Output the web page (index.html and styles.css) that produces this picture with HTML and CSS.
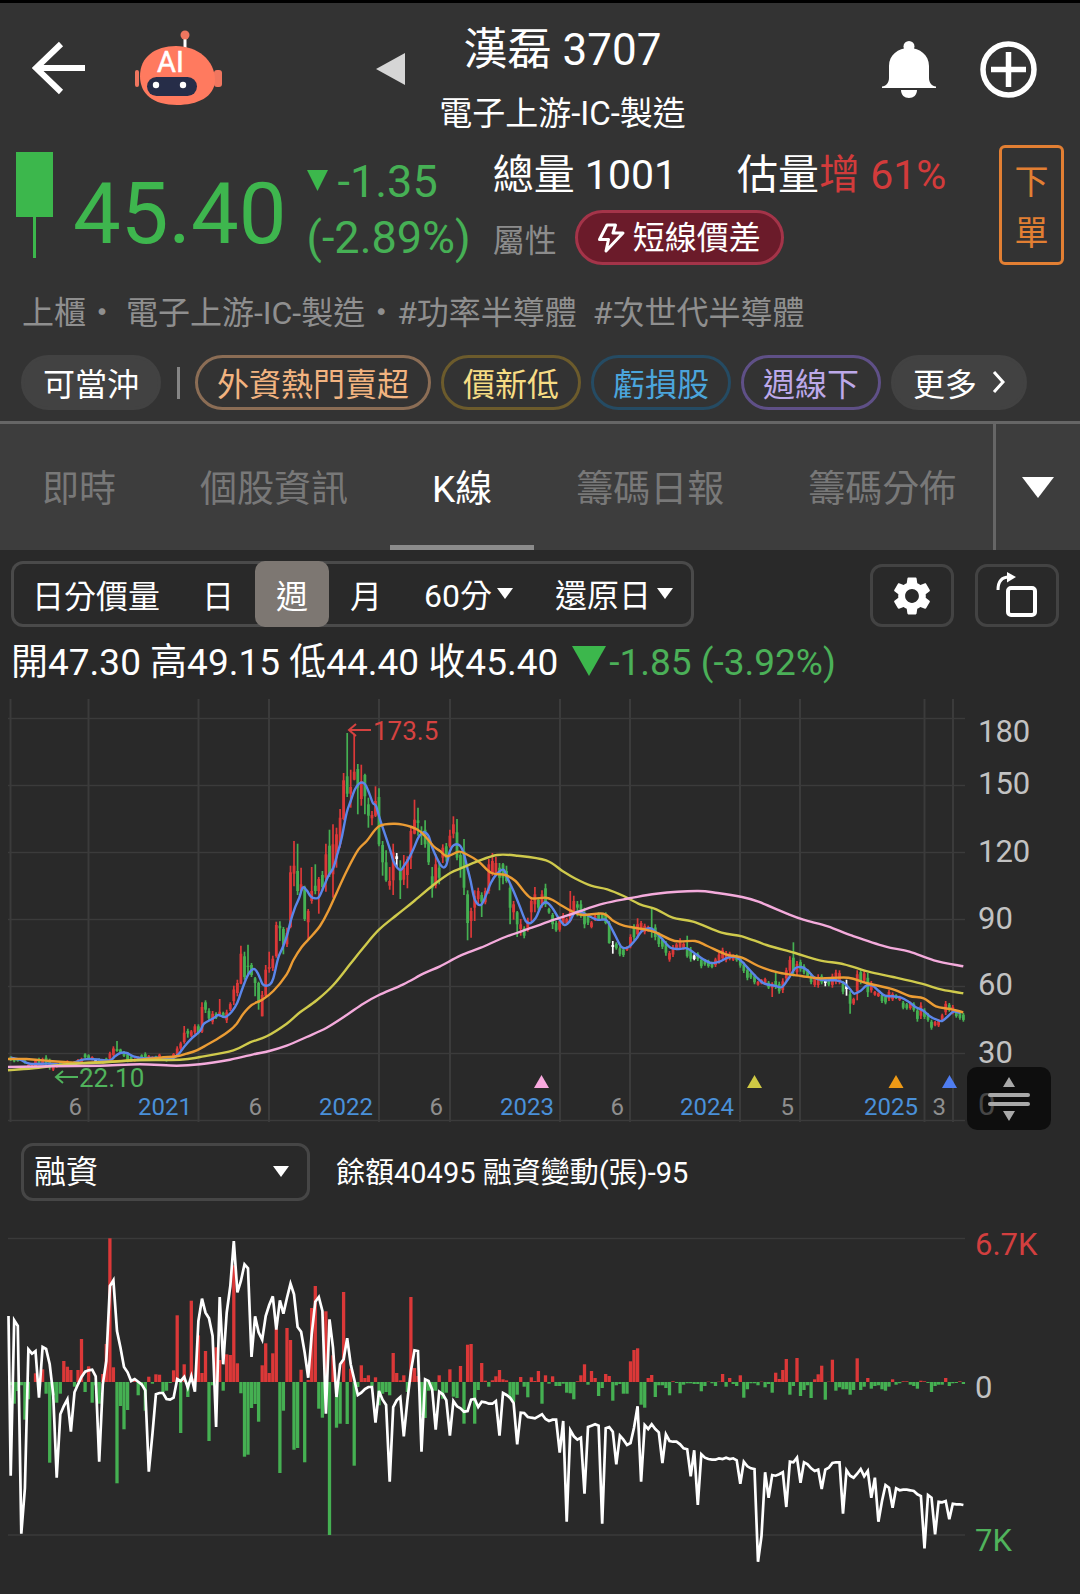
FILE: index.html
```html
<!DOCTYPE html>
<html lang="zh-Hant">
<head>
<meta charset="utf-8">
<meta name="viewport" content="width=device-width, initial-scale=1">
<title>漢磊 3707</title>
<link rel="stylesheet" href="styles.css">
</head>
<body>
<header class="summary">
  <div class="topbar">
    <button class="icon-btn" aria-label="返回">
      <svg width="53" height="54" viewBox="0 0 53 54"><path d="M29 3 4 27l25 24M4 27h49" fill="none" stroke="#fff" stroke-width="6"/></svg>
    </button>
    <button class="icon-btn robot" aria-label="AI 助理">
      <svg width="87" height="76" viewBox="0 0 87 76">
        <path d="M50 8v10" stroke="#fff" stroke-width="3"/>
        <circle cx="50" cy="5" r="4.500" fill="#f0765f"/>
        <rect x="0" y="40" width="4" height="17" rx="2" fill="#f0765f"/>
        <rect x="79" y="40" width="8" height="17" rx="3" fill="#f0765f"/>
        <path d="M5 46C5 27 20 16 41 16s39 14 39 34c0 17-18 25-38 25C18 75 5 64 5 46z" fill="#ff7a5f"/>
        <rect x="12" y="47" width="50" height="19" rx="9.500" fill="#262d48"/>
        <circle cx="21" cy="55" r="3.200" fill="#fff"/><circle cx="48" cy="55" r="3.200" fill="#fff"/>
        <text x="22" y="42" font-size="29" fill="#fff" stroke="#fff" stroke-width=".5">AI</text>
      </svg>
    </button>
    <div class="stock">
      <button class="icon-btn" aria-label="上一檔">
        <svg width="29" height="32" viewBox="0 0 29 32"><path d="M0 16 29 0v32z" fill="#d6d6d6"/></svg>
      </button>
      <div class="stock-name">
        <h1>漢磊 3707</h1>
        <p>電子上游-IC-製造</p>
      </div>
    </div>
    <button class="icon-btn" aria-label="通知">
      <svg width="54" height="57" viewBox="0 0 54 57" fill="#fff"><circle cx="27" cy="5.500" r="5.500"/><path d="M7 25C7 14 16 7 27 7s20 7 20 18v12c0 5 3 8 7 8.500V47H0v-1.500C4 45 7 42 7 37zM19 49h16c0 5-3.500 8-8 8s-8-3-8-8z"/></svg>
    </button>
    <button class="icon-btn add" aria-label="加入自選">
      <svg width="57" height="57" viewBox="0 0 57 57" fill="none" stroke="#fff"><circle cx="28.500" cy="28.500" r="25.500" stroke-width="5.500"/><path d="M28.500 11v35M11 28.500h35" stroke-width="5.500"/></svg>
    </button>
  </div>

  <div class="quote">
    <svg class="candle" width="37" height="106" viewBox="0 0 37 106" aria-hidden="true"><path d="M0 0h37v65H20v41h-3V65H0z" fill="#3cb74c"/></svg>
    <div class="price">45.40</div>
    <div class="change">
      <div><svg class="down" width="21" height="21" viewBox="0 0 21 21"><path d="M0 0h21L10.500 21z" fill="#3cb74c"/></svg>-1.35</div>
      <div>(-2.89%)</div>
    </div>
    <div class="stats">
      <div class="volume"><span>總量 1001</span><span>估量<em>增 61%</em></span></div>
      <div class="trait"><span>屬性</span>
        <button class="trait-pill"><svg width="27" height="30" viewBox="0 0 27 30"><path d="M9 2h8.500L15 10h10L8 28l2.500-11.500h-9z" fill="none" stroke="#fff" stroke-width="3" stroke-linejoin="round"/></svg>短線價差</button>
      </div>
    </div>
    <button class="order">下<br>單</button>
  </div>

  <p class="category">上櫃・ 電子上游-IC-製造・#功率半導體&nbsp; #次世代半導體</p>
  <div class="chips">
    <button class="chip solid">可當沖</button>
    <i class="bar"></i>
    <button class="chip orange">外資熱門賣超</button>
    <button class="chip yellow">價新低</button>
    <button class="chip blue">虧損股</button>
    <button class="chip purple">週線下</button>
    <button class="chip solid more">更多<svg width="13" height="22" viewBox="0 0 13 22"><path d="m2 1 9 10-9 10" fill="none" stroke="#fff" stroke-width="3"/></svg></button>
  </div>
</header>

<nav class="tabs">
  <div class="tab-strip">
    <a href="#now">即時</a><a href="#info">個股資訊</a><a href="#k" class="active">K線</a><a href="#daily">籌碼日報</a><a href="#dist">籌碼分佈</a>
  </div>
  <button class="tab-more" aria-label="更多分頁"><svg width="32" height="21" viewBox="0 0 32 21"><path d="M0 0h32L16 21z" fill="#fff"/></svg></button>
</nav>

<main>
  <div class="toolbar">
    <div class="periods">
      <button>日分價量</button><button>日</button><button class="active">週</button><button>月</button>
      <label class="drop"><select aria-label="分鐘"><option>60分</option></select><svg width="16" height="11" viewBox="0 0 16 11"><path d="M0 0h16L8 11z" fill="#fff"/></svg></label>
      <label class="drop"><select aria-label="還原"><option>還原日</option></select><svg width="16" height="11" viewBox="0 0 16 11"><path d="M0 0h16L8 11z" fill="#fff"/></svg></label>
    </div>
    <button class="tool" aria-label="設定">
      <svg width="46" height="46" viewBox="0 0 24 24" fill="#fff"><path d="M19.140 12.940c.04-.3.060-.610.060-.940 0-.320-.020-.640-.070-.940l2.030-1.580c.180-.140.230-.410.120-.610l-1.920-3.320c-.120-.220-.370-.290-.590-.220l-2.390.960c-.5-.380-1.030-.7-1.620-.940l-.360-2.540c-.040-.240-.240-.410-.480-.410h-3.840c-.240 0-.430.170-.470.410l-.360 2.540c-.590.240-1.130.570-1.620.940l-2.390-.960c-.220-.080-.470 0-.590.220L2.740 8.870c-.120.210-.080.470.120.610l2.030 1.580c-.050.3-.090.630-.090.940s.020.640.070.940l-2.030 1.580c-.180.140-.230.410-.120.610l1.920 3.320c.120.220.370.290.590.220l2.390-.960c.5.380 1.030.7 1.620.940l.360 2.540c.050.240.240.410.480.410h3.840c.240 0 .440-.170.470-.410l.360-2.540c.590-.240 1.130-.560 1.620-.940l2.390.960c.220.080.470 0 .590-.220l1.920-3.320c.120-.220.070-.470-.120-.610zM12 15.600c-1.980 0-3.600-1.620-3.600-3.600s1.620-3.600 3.600-3.600 3.600 1.620 3.600 3.600-1.620 3.600-3.600 3.600z"/></svg>
    </button>
    <button class="tool" aria-label="旋轉">
      <svg width="42" height="48" viewBox="0 0 42 48" fill="none" stroke="#fff"><rect x="12" y="16" width="27" height="27" rx="3" stroke-width="4"/><path d="M2 18C2 9 6 5 13 5" stroke-width="3"/><path d="m11 0 9 5-9 5.500z" fill="#fff" stroke="none"/></svg>
    </button>
  </div>

  <div class="ohlc">
    <span>開47.30 高49.15 低44.40 收45.40</span>
    <span class="fall"><svg width="34" height="30" viewBox="0 0 34 30"><path d="M0 0h34L17 30z" fill="#3cb74c"/></svg>-1.85 (-3.92%)</span>
  </div>

  <section class="kline">
    <svg viewBox="0 0 1080 440" role="img" aria-label="週K線圖">
      <g class="grid">
        <path d="M8 27.500h957M8 94.500h957M8 161.500h957M8 228.500h957M8 295.500h957M8 362.500h957M8 429.500h957"/>
        <path class="v" d="M10.500 8v423M88.500 8v423M198.500 8v423M269 8v423M379 8v423M450 8v423M560 8v423M630 8v423M740 8v423M800 8v423M924.500 8v423M953 8v423"/>
      </g>
      <g id="candles"></g>
      <g id="averages"></g>
      <g class="axis-y">
        <text x="978" y="51">180</text><text x="978" y="103">150</text><text x="978" y="171">120</text><text x="978" y="238">90</text><text x="978" y="304">60</text><text x="978" y="372">30</text><text x="978" y="424">0</text>
      </g>
      <g class="axis-x">
        <text x="82" y="424">6</text><text class="yr" x="192" y="424">2021</text><text x="262" y="424">6</text><text class="yr" x="373" y="424">2022</text><text x="443" y="424">6</text><text class="yr" x="554" y="424">2023</text><text x="624" y="424">6</text><text class="yr" x="734" y="424">2024</text><text x="794" y="424">5</text><text class="yr" x="918" y="424">2025</text><text x="946" y="424">3</text>
      </g>
      <g class="peak"><path d="M371 39h-22m7-6-7 6 7 6"/><text x="373" y="49">173.5</text></g>
      <g class="trough"><path d="M78 386H56m7-6-7 6 7 6"/><text x="79" y="396">22.10</text></g>
      <path d="m541.500 384 7.500 13h-15z" fill="#f8a9de"/><path d="m754.500 384 7.500 13h-15z" fill="#cfc944"/><path d="m896 384 7.500 13h-15z" fill="#ee9a16"/><path d="m949.500 384 7.500 13h-15z" fill="#4f7df0"/>
    </svg>
    <button class="resize" aria-label="調整高度">
      <svg width="42" height="44" viewBox="0 0 42 44" fill="#a9a9a9"><path d="m21 0 6 10H15zM21 44l6-10H15z"/><rect y="16" width="42" height="4" rx="2"/><rect y="25" width="42" height="4" rx="2"/></svg>
    </button>
  </section>

  <div class="indicator">
    <label class="picker"><select aria-label="指標"><option>融資</option></select><svg width="16" height="11" viewBox="0 0 16 11"><path d="M0 0h16L8 11z" fill="#fff"/></svg></label>
    <span>餘額40495 融資變動(張)-95</span>
  </div>

  <section class="margin">
    <svg viewBox="0 0 1080 384" role="img" aria-label="融資變動圖">
      <path class="rule" d="M8 27.500h957M8 324h957"/>
      <g id="bars"></g>
      <path id="balance"/>
      <g class="axis-y">
        <text class="red" x="975" y="44">6.7K</text><text x="975" y="187">0</text><text class="green" x="975" y="340">7K</text>
      </g>
    </svg>
  </section>
</main>
<script src="chart.js"></script>
</body>
</html>
```
FILE: styles.css
```css
* { box-sizing: border-box; }
body {
  margin: 0;
  background: #292929;
  color: #fff;
  font-family: Roboto, "Noto Sans CJK TC", sans-serif;
  font-size: 32px;
}
h1, p { margin: 0; font-weight: 400; }
svg { display: block; flex: none; }
button, select {
  margin: 0;
  padding: 0;
  border: 0;
  background: none;
  color: inherit;
  font: inherit;
}
select { appearance: none; }
em { font-style: normal; color: #d23b3b; }

.summary {
  background: #333;
  border-top: 3px solid #000;
  border-bottom: 3px solid #666;
  padding-bottom: 11px;
}
.topbar { display: flex; align-items: flex-start; padding: 14px 43px 0 32px; }
.topbar .icon-btn { margin-top: 24px; }
.topbar .robot { margin: 13px 0 0 50px; }
.topbar .add { margin-left: 44px; }
.stock { flex: 1; display: flex; justify-content: center; gap: 34px; padding-right: 42px; }
.stock .icon-btn { align-self: flex-start; margin-top: 36px; }
.stock-name { text-align: center; }
.stock-name h1 { font-size: 44px; line-height: 66px; }
.stock-name p { font-size: 33px; line-height: 62px; }

.quote { display: flex; align-items: flex-start; padding: 0 16px; }
.candle { margin-top: 7px; }
.price { margin: 16px 0 0 20px; font-size: 85px; line-height: 106px; color: #3eb64e; }
.change { margin: 9px 0 0 20px; font-size: 45px; line-height: 56px; color: #46b055; }
.change div { display: flex; gap: 10px; }
.change .down { margin-top: 16px; }
.stats { margin-left: 22px; display: grid; gap: 4px; }
.volume { display: flex; gap: 60px; font-size: 41px; line-height: 61px; white-space: nowrap; }
.trait { display: flex; align-items: center; gap: 18px; color: #8c8c8c; }
.trait-pill {
  display: flex;
  align-items: center;
  gap: 8px;
  height: 55px;
  padding: 0 20px;
  border: 3px solid #a43449;
  border-radius: 28px;
  background: #6b1b2a;
  color: #fff;
  line-height: 48px;
}
.order {
  margin-left: auto;
  width: 65px;
  height: 120px;
  padding-top: 5px;
  border: 3px solid #e27f33;
  border-radius: 6px;
  color: #e27f33;
  font-size: 34px;
  line-height: 51px;
}
.category { padding: 22px 22px 18px; line-height: 48px; color: #8f8f8f; white-space: nowrap; }
.chips { display: flex; align-items: center; gap: 10px; padding: 0 21px; }
.chip { height: 55px; padding: 0 19px 2px; border: 3px solid; border-radius: 28px; white-space: nowrap; }
.bar { width: 3px; height: 32px; margin: 0 5px 0 6px; background: #858585; }
.solid { background: #424242; border-color: #424242; }
.orange { color: #f2b380; border-color: #8b6d55; }
.yellow { color: #f6dc84; border-color: #6c5b2c; }
.blue { color: #4ba5dc; border-color: #254b63; }
.purple { color: #bda9ea; border-color: #5f5087; }
.more { display: flex; align-items: center; gap: 15px; }

.tabs { display: flex; height: 126px; background: #3d3d3d; }
.tab-strip { flex: 1; display: flex; overflow: hidden; }
.tab-strip a {
  flex: none;
  padding: 5px 42px 0;
  border-bottom: 5px solid transparent;
  font-size: 37px;
  line-height: 121px;
  color: #787878;
  text-decoration: none;
}
.tab-strip .active { color: #fff; border-color: #8b8b8b; }
.tab-more { width: 87px; padding: 0 26px; border-left: 3px solid #666; }

.toolbar { display: flex; align-items: flex-end; gap: 21px; padding: 11px 21px 0 11px; }
.periods {
  display: flex;
  height: 66px;
  margin-right: auto;
  border-radius: 12px;
  box-shadow: inset 0 0 0 3px #4a4a4a;
}
.periods button { padding: 0 21px; }
.periods .active { border-radius: 10px; background: #7d7772; }
.drop { display: flex; align-items: center; gap: 5px; padding: 0 21px; }
.drop select { padding-top: 4px; }
.drop svg { margin-bottom: 2px; }
.tool {
  display: grid;
  place-items: center;
  width: 84px;
  height: 63px;
  border: 3px solid #434343;
  border-radius: 12px;
}
.ohlc { display: flex; gap: 14px; padding: 9px 11px 1px; font-size: 37px; line-height: 54px; white-space: nowrap; }
.fall { display: flex; align-items: center; gap: 3px; color: #4bb058; }
.fall svg { margin-bottom: 4px; }

.kline { position: relative; }
.kline > svg, .margin > svg { width: 100%; height: auto; }
.grid path { stroke: #3b3b3b; stroke-width: 1.500; }
.grid .v { stroke-width: 2; }
.axis-y { font-size: 31px; fill: #c2c2c2; }
.axis-x { font-size: 24px; fill: #8f8f8f; text-anchor: end; }
.axis-x .yr { fill: #4a90d9; }
.peak, .trough { font-size: 26px; }
.peak path, .trough path { fill: none; stroke-width: 2; }
.peak { fill: #d54240; }
.peak path { stroke: #d54240; }
.trough { fill: #50b35c; }
.trough path { stroke: #50b35c; }
.resize {
  position: absolute;
  right: 29px;
  bottom: 1px;
  display: grid;
  place-items: center;
  width: 84px;
  height: 63px;
  border-radius: 10px;
  background: rgba(0, 0, 0, .64);
}
.wick { stroke-width: 1.700; }
.body { stroke-width: 2.800; }
.up { stroke: #dc3838; }
.dn { stroke: #45b052; }
.flat { stroke: #fff; }
.ma { fill: none; stroke-width: 2.400; }

.indicator { display: flex; align-items: center; gap: 26px; padding: 12px 21px 10px; font-size: 29px; }
.indicator span { padding-top: 2px; line-height: 54px; }
.picker { position: relative; width: 289px; height: 58px; font-size: 32px; }
.picker select { width: 100%; height: 100%; padding: 0 10px; border: 3px solid #464646; border-radius: 12px; }
.picker svg { position: absolute; right: 21px; top: 23px; }
.rule { stroke: #3a3a3a; stroke-width: 1.500; }
.bar-line { stroke-width: 3.300; }
#balance { fill: none; stroke: #fff; stroke-width: 2.700; }
.red { fill: #d23f3f; }
.green { fill: #50b35c; }
```
FILE: chart.js
```js
const STEP = 3.5417;
const xAt = i => 10.7 + STEP * i;
const f = n => n.toFixed(1);

// Weekly candles: colour, high, low, and optionally body top and bottom (thirds of a chart unit).
const candles = `g 1096 1110|g 1100 1114|g 1104 1112|r 1102 1110|g 1106 1118|r 1120 1130|r 1122 1134|r 1104 1134|g 1100 1118|r 1100 1122
g 1093 1128|g 1103 1136|r 1118 1140|r 1116 1130|g 1112 1124|r 1114 1126|r 1108 1124|g 1112 1128|r 1110 1122|r 1104 1120
r 1100 1118|g 1087 1102|g 1090 1106|r 1096 1108|w 1104 1116|g 1102 1114|r 1104 1118|g 1100 1114|r 1082 1108|r 1066 1098
g 1050 1082 1074 1080|g 1073 1086|g 1080 1098|g 1084 1114|g 1094 1112|r 1102 1112|r 1096 1108|g 1090 1104|g 1084 1110|r 1092 1106
r 1096 1108|g 1094 1108|r 1088 1104|g 1096 1110|g 1100 1112|r 1100 1108|r 1086 1102|r 1066 1098|r 1052 1078|r 1005 1058 1025 1053
g 1013 1040 1020 1028|r 1017 1038|r 1000 1030|g 1000 1030|r 934 1026 948 1022|g 928 966 934 956|g 952 990|r 960 1000|g 964 984|r 924 976 962 970
g 962 980|r 956 996|r 934 960|r 884 942|r 866 916|r 764 880 788 878|g 782 866 796 858|g 761 850 824 828|g 816 858 822 852|g 858 916 862 876
g 872 956 876 936|r 900 976 912 976|r 822 916 836 914|r 782 845 828 834|r 794 840|r 692 800 702 795|g 691 750 704 712|g 708 790 714 762|r 710 768 726 760|r 524 712 544 708
r 450 586 524 548|g 458 612 540 600|r 530 602 580 600|g 584 690 588 684|r 654 744 660 694|r 528 638 600 630|g 520 610 584 600|r 558 668 564 600|g 540 600|r 458 602 490 560
g 416 558 464 550|r 400 620 460 550|r 410 530 430 500|r 354 470 380 460|r 246 388 268 384|g 126 318 256 308|r 236 350 288 308|r 128 268 242 266|g 219 370 234 290|r 221 344 270 324
g 248 370 252 316|g 320 410 340 374|r 360 403 372 382|r 286 378 330 374|g 292 466 318 460|g 450 554 462 514|g 478 572 514 568|r 528 596 570 584|r 458 612 484 568|w 486 530 496 504
g 508 624 540 568|r 492 582 530 566|r 496 592 504 552|r 408 534 420 500|r 326 430 386 428|g 350 434 388 396|g 406 462 424 434|g 388 470 416 460|g 436 522 450 514|g 528 620 556 592
r 490 592 520 584|g 510 580 530 560|r 460 516 470 500|g 456 512 466 500|r 416 470 434 466|r 376 442 400 428|g 384 508 424 500|g 480 560 492 530|g 444 612 480 590|g 598 748 610 696
r 650 740 660 690|r 598 690 614 650|r 590 640 600 624|g 604 678 612 632|r 590 640 600 634|r 504 608 520 600|r 486 554 510 548|r 498 552 516 546|g 516 598 530 560|g 516 580 520 560
g 524 575 540 570|g 580 700 590 650|r 630 686 640 664|g 660 738 664 700|r 684 734 700 714|g 706 742 712 734|r 680 722|r 620 690 630 664|r 588 664 610 640|g 618 658 626 650
r 598 650 610 640|g 578 648 592 640|g 650 668|g 666 714 672 700|g 690 722 696 718|r 684 722 690 716|r 666 704|r 680 702|r 600 694 654 690|r 614 664 630 660
g 630 676 640 650|g 628 680 640 670|g 650 712 668 700|g 668 702|r 690 712|r 670 690|g 664 690|g 666 688|g 664 700 668 696|g 690 758 696 756
w 750 788 762 768|g 754 776|g 766 796|g 770 798|r 766 780|r 730 772 738 766|g 700 748|r 682 742 700 730|r 690 720|r 698 730
r 704 722|g 648 740 710 720|g 700 748|g 724 768|g 740 774|g 750 794|r 780 812|r 762 798|r 756 778|r 742 776
r 754 776|g 734 800 770 796|g 768 812|w 790 808|g 784 810|g 800 832|g 804 824|g 806 830|g 812 832|r 800 828
r 784 818|r 770 810|r 780 814|r 782 808|r 790 810|g 790 812|g 798 830|g 814 846|g 830 868|g 842 864
g 850 880|r 870 884|r 864 880|r 860 882|g 870 894|r 874 918 878 890|g 842 894 870 888|g 872 908|r 862 906|r 830 870
r 796 850|g 754 856 800 840|r 810 852|g 806 842|g 820 850|g 834 860|g 846 880|r 856 888|r 850 890|g 850 880
w 858 886 868 876|g 858 886|r 848 890|r 836 880|r 838 880|g 870 910|w 866 914 886 894|g 900 968 910 938|r 920 942|r 838 928 850 900
g 834 880|r 840 876|g 846 918|r 870 905|r 900 914|r 904 918|g 906 936|g 912 940|r 896 930|r 904 930
g 910 924|r 914 930|g 930 955|g 936 956|r 932 956|g 934 962|g 950 992|r 934 984|g 952 984|g 966 992
g 986 1016|r 990 1006|r 984 1008|r 968 992|r 930 972|g 936 962|r 942 970|g 958 980|g 960 986|g 966 992`;

const tone = { r: 'up', g: 'dn', w: 'flat' };
document.getElementById('candles').innerHTML = candles.split(/[|\n]/).map((row, i) => {
  const [c, ...n] = row.split(' ');
  const [hi, lo] = n.map(Number);
  const pad = (lo - hi) / 5;
  const top = n[2] ? +n[2] : hi + pad;
  const bottom = n[3] ? +n[3] : lo - pad;
  const x = f(xAt(i));
  return `<path class="wick ${tone[c]}" d="M${x} ${f(hi / 3)}V${f(lo / 3)}"/>` +
    `<path class="body ${tone[c]}" d="M${x} ${f(top / 3)}V${f(bottom / 3)}"/>`;
}).join('');

// Moving averages: the early and late stretches are sampled at different horizontal densities.
const early = s => pairs(s).map(([x, y]) => [x / 3, y / 3]);
const late = s => pairs(s).map(([x, y]) => [440 + x / 2.45, y / 3]);
function pairs(s) { return s.trim().split(/\s+/).map(p => p.split(',').map(Number)); }

function smooth(p) {
  let d = `M${f(p[0][0])} ${f(p[0][1])}`;
  for (let i = 0; i < p.length - 1; i++) {
    const a = p[i - 1] || p[i], b = p[i], c = p[i + 1], e = p[i + 2] || c;
    d += `C${f(b[0] + (c[0] - a[0]) / 6)} ${f(b[1] + (c[1] - a[1]) / 6)} ` +
      `${f(c[0] - (e[0] - b[0]) / 6)} ${f(c[1] - (e[1] - b[1]) / 6)} ${f(c[0])} ${f(c[1])}`;
  }
  return d;
}

const averages = [
  ['#5b86ea',
    '32,1100 60,1106 90,1118 150,1118 200,1122 240,1108 265,1104 300,1106 330,1108 345,1096 361,1086 380,1086 400,1096 430,1102 470,1100 510,1104 535,1090 555,1064 575,1042 600,1020 612,998 640,982 655,972 675,978 695,962 712,935 728,890 745,850 762,834 775,850 787,878 797,884 810,880 820,862 835,800 850,765 862,730 872,690 885,650 898,620 908,590 920,598 932,616 945,622 957,618 970,590 985,555 1000,530 1012,490 1025,440 1040,365 1052,330 1065,295 1080,276 1095,280 1107,305 1118,335 1128,345 1140,385 1155,430 1170,475 1180,510 1192,530 1203,537 1215,520 1225,505 1240,475 1255,440 1270,424 1285,434 1297,470 1310,500 1325,526 1338,524 1350,480 1362,462 1380,464 1392,490 1402,530',
    '75,570 85,625 100,642 112,615 125,575 140,548 155,536 165,560 180,600 195,645 210,690 222,696 235,680 248,645 260,634 275,650 290,680 305,702 318,690 330,665 345,662 360,672 385,686 405,686 415,700 430,735 445,768 462,768 480,745 495,720 515,712 530,724 545,745 565,770 585,774 605,772 625,788 645,805 665,816 685,812 705,800 725,798 740,812 755,832 775,858 795,878 820,884 838,888 855,860 870,832 885,828 900,838 920,862 945,868 970,868 990,876 1005,895 1015,908 1030,900 1045,884 1060,884 1075,900 1090,914 1110,916 1130,920 1150,934 1165,948 1185,960 1200,976 1215,985 1230,990 1245,975 1258,962 1275,966'],
  ['#eb9c34',
    '24,1104 80,1104 150,1110 240,1116 320,1112 400,1108 480,1100 530,1096 560,1088 590,1078 620,1062 655,1042 690,1018 710,998 730,968 755,942 787,926 820,900 860,850 880,808 905,768 935,735 960,705 985,660 1010,605 1040,540 1075,476 1100,450 1137,406 1185,398 1235,408 1265,425 1300,465 1320,480',
    '18,496 45,482 65,490 95,512 125,545 160,552 185,570 205,600 225,622 260,620 280,630 300,645 325,662 350,672 400,668 425,690 450,704 500,715 530,725 575,750 625,750 655,765 700,790 740,800 780,825 830,845 885,855 930,862 1000,860 1045,876 1110,895 1150,915 1185,922 1215,946 1250,954 1282,964'],
  ['#cfca4c',
    '24,1138 100,1132 200,1120 320,1114 400,1108 540,1106 600,1098 700,1078 750,1054 800,1036 860,998 900,964 950,928 1000,882 1050,820 1090,770 1137,716 1190,672 1240,632 1300,582',
    '25,546 55,530 90,512 140,492 190,494 260,508 300,540 330,562 370,584 410,595 450,615 490,640 530,655 570,680 620,692 690,725 740,736 800,762 870,786 930,808 990,820 1050,842 1110,858 1180,878 1230,896 1282,907'],
  ['#f4abdc',
    '24,1128 150,1126 300,1124 420,1120 530,1124 600,1120 690,1106 760,1090 808,1080 860,1064 920,1038 980,1010 1040,972 1090,938 1137,912 1210,880 1270,848',
    '0,826 50,794 100,770 160,738 225,710 280,686 330,666 400,638 465,622 530,608 630,600 680,606 740,618 780,632 850,668 890,686 950,706 1010,734 1090,766 1150,782 1210,808 1282,826']
];
document.getElementById('averages').innerHTML = averages.map(([color, a, b]) =>
  `<path class="ma" stroke="${color}" d="${smooth([...early(a), ...late(b)])}"/>`).join('');

// Weekly margin change, positive above the zero line.
const change = [
  -10,-65,-27,-10,-113,-52,0,26,-10,38,-35,-242,-40,-62,-35,63,46,36,-14,36,129,-30,47,-62,-10,-65,24,114,431,44,
  -304,-72,-142,-84,0,5,-40,-10,-86,16,-5,23,22,-30,-26,-3,35,200,-153,53,-45,244,10,140,27,93,-177,-10,104,66,
  -26,83,81,350,56,-34,-224,-218,-78,-66,-119,50,116,27,86,160,-273,-86,162,126,-203,-198,37,-241,6,222,288,-80,-107,212,
  -459,80,-137,-125,270,-126,40,-251,-15,50,12,20,-12,14,-70,-35,-30,-40,87,27,5,20,-30,255,42,18,-100,-108,-26,-26,
  -26,20,-50,-32,38,-44,-48,48,-125,112,114,-125,-24,57,4,-14,5,17,36,8,5,-50,-60,-38,15,-14,-46,14,3,33,
  -65,20,-5,17,-12,-12,-5,-32,-34,-52,2,20,53,-8,33,12,-42,-18,24,18,-56,-10,-6,-35,-35,62,96,101,-68,-77,
  12,21,-45,-10,-10,-18,-40,2,-3,-34,-8,-4,-4,-6,-6,-28,-12,1,-4,-12,1,24,-14,12,-6,-12,20,-47,-22,-4,
  -4,-10,1,-16,-6,-32,28,9,36,69,-38,-12,72,-42,-24,-10,-48,8,23,49,-53,1,67,-26,-16,-22,-22,-38,-24,71,
  -24,-14,12,-20,-12,-10,-22,-26,-14,8,-8,-4,2,2,-8,-12,-20,4,2,-3,-30,-12,-8,-8,12,-12,-4,-3,2,-6
];
const ZERO = 171;
document.getElementById('bars').innerHTML = change.map((v, i) =>
  v ? `<path class="bar-line ${v > 0 ? 'up' : 'dn'}" d="M${f(xAt(i))} ${ZERO}V${f(ZERO - v / 3)}"/>` : '').join('');

// Outstanding margin balance.
const balance = [
  1034,568,585,1208,1072,655,668,660,800,648,654,700,790,1040,850,825,805,902,784,760,738,722,718,716,736,992,760,690,465,448,
  600,650,708,724,750,744,752,760,778,1022,910,790,786,786,804,806,800,744,750,738,770,736,782,570,503,545,562,615,888,498,
  700,545,465,330,484,450,400,412,678,556,604,626,555,522,496,596,508,548,500,458,490,588,602,665,740,610,512,498,540,848,
  565,650,798,700,685,622,700,745,792,785,774,768,768,875,780,806,822,1052,828,808,798,916,808,720,658,660,962,745,750,776,
  896,782,790,808,914,810,826,832,842,840,806,804,828,812,814,818,818,810,914,786,792,800,816,940,845,846,858,860,862,856,
  850,864,870,866,866,965,870,1172,898,916,926,920,1088,888,884,880,884,1178,892,888,902,1000,914,926,942,936,890,826,1052,882,
  894,880,894,904,996,910,930,932,932,940,952,955,1036,958,1122,970,980,984,986,986,982,984,980,984,982,988,1058,992,1006,1012,
  1014,1292,1215,1024,1100,1032,1034,1030,1024,1128,992,994,980,1055,994,1000,1012,1020,1016,1074,1016,1010,996,994,994,1148,1018,1034,1040,1028,
  1014,1036,1020,1100,1040,1172,1110,1062,1070,1130,1072,1078,1076,1076,1078,1080,1090,1095,1252,1092,1100,1210,1112,1114,1110,1165,1118,1120,1120,1122
];
document.getElementById('balance').setAttribute('d',
  'M8.500 105L' + balance.map((y, i) => `${f(xAt(i))} ${f(y / 3 - 80)}`).join('L'));
```
